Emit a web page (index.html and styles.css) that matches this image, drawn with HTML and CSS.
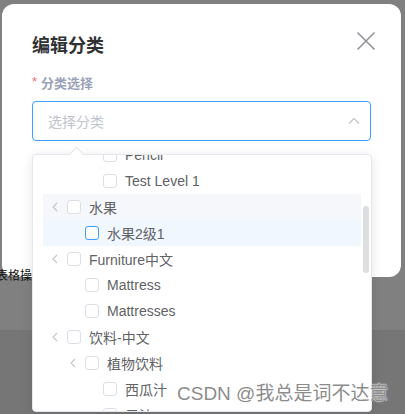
FILE: index.html
```html
<!DOCTYPE html>
<html lang="zh-CN">
<head>
  <meta charset="UTF-8">
  <meta name="viewport" content="width=device-width, initial-scale=1.0">
  <title>编辑分类</title>
  <link rel="stylesheet" href="styles.css">
</head>
<body>
  <div class="dialog">
    <div class="dialog-header">
      <span class="dialog-title">编辑分类</span>
      <button class="dialog-close" aria-label="close">
        <svg width="20" height="20" viewBox="0 0 20 20"><path d="M1.5 1.5L18.5 18.5M18.5 1.5L1.5 18.5" stroke="#909399" stroke-width="1.6" fill="none"/></svg>
      </button>
    </div>
    <div class="form-item">
      <label class="form-label"><span class="required">*</span>分类选择</label>
      <div class="select">
        <span class="placeholder">选择分类</span>
        <svg class="select-arrow" width="12" height="8" viewBox="0 0 12 8"><path d="M1 6.5L6 1.5L11 6.5" stroke="#c0c4cc" stroke-width="1.2" fill="none"/></svg>
      </div>
    </div>
  </div>
  <div class="page-peek">表格操作</div>

  <div class="dropdown">
    <div class="dropdown-arrow"></div>
    <div class="dropdown-body">
      <ul class="tree">
        <li class="node lvl3"><span class="expand"></span><span class="check"></span>Pencil</li>
        <li class="node lvl3"><span class="expand"></span><span class="check"></span>Test Level 1</li>
        <li class="node lvl1 hover"><span class="expand"><svg width="6" height="10" viewBox="0 0 6 10"><path d="M5 1L1 5L5 9" stroke="#c0c4cc" stroke-width="1.1" fill="none"/></svg></span><span class="check"></span>水果</li>
        <li class="node lvl2 current"><span class="expand"></span><span class="check active"></span>水果2级1</li>
        <li class="node lvl1"><span class="expand"><svg width="6" height="10" viewBox="0 0 6 10"><path d="M5 1L1 5L5 9" stroke="#c0c4cc" stroke-width="1.1" fill="none"/></svg></span><span class="check"></span>Furniture中文</li>
        <li class="node lvl2"><span class="expand"></span><span class="check"></span>Mattress</li>
        <li class="node lvl2"><span class="expand"></span><span class="check"></span>Mattresses</li>
        <li class="node lvl1"><span class="expand"><svg width="6" height="10" viewBox="0 0 6 10"><path d="M5 1L1 5L5 9" stroke="#c0c4cc" stroke-width="1.1" fill="none"/></svg></span><span class="check"></span>饮料-中文</li>
        <li class="node lvl2"><span class="expand"><svg width="6" height="10" viewBox="0 0 6 10"><path d="M5 1L1 5L5 9" stroke="#c0c4cc" stroke-width="1.1" fill="none"/></svg></span><span class="check"></span>植物饮料</li>
        <li class="node lvl3"><span class="expand"></span><span class="check"></span>西瓜汁</li>
        <li class="node lvl3"><span class="expand"></span><span class="check"></span>果汁</li>
      </ul>
      <div class="scrollbar"></div>
    </div>
  </div>

  <div class="watermark">CSDN @我总是词不达意</div>
</body>
</html>
```

FILE: styles.css
```css
html, body { margin:0; padding:0; height:100%; overflow:hidden; }
body { font-family:"Liberation Sans", Arial, "Noto Sans CJK SC", sans-serif; background:linear-gradient(#808080 0, #808080 330px, #767676 330px); position:relative; padding-top:4px; box-sizing:border-box; }

.page-peek { position:absolute; left:-4px; top:266px; font-size:12px; color:#111; }

.dialog { margin:0 4px 0 2px; height:273px; background:#fff; border-radius:12px; padding:30px 30px 0; box-sizing:border-box; position:relative; }
.dialog-header { display:flex; justify-content:space-between; align-items:flex-start; height:24px; }
.dialog-title { font-size:18px; line-height:24px; font-weight:bold; color:#303133; }
.dialog-close { border:none; background:none; padding:0; margin:-3px -5px 0 0; width:20px; height:20px; cursor:pointer; }
.dialog-close svg { display:block; }

.form-item { margin-top:16px; }
.form-label { display:block; font-size:13px; line-height:20px; font-weight:bold; color:#9aa2b9; margin-bottom:7px; }
.required { color:#f56c6c; margin-right:4px; font-weight:normal; position:relative; top:-2px; }
.select { height:40px; box-sizing:border-box; border:1px solid #409eff; border-radius:4px; display:flex; align-items:center; justify-content:space-between; padding:0 10px 0 15px; }
.placeholder { font-size:14px; color:#c0c4cc; }
.select-arrow { display:block; }

.dropdown { position:absolute; left:32px; top:154px; width:340px; height:258px; box-sizing:border-box; background:#fff; border:1px solid #e4e7ed; border-radius:4px; box-shadow:0 2px 12px rgba(0,0,0,0.1); }
.dropdown-arrow { position:absolute; left:38px; top:-6px; width:10px; height:10px; background:#fff; border-top:1px solid #e4e7ed; border-left:1px solid #e4e7ed; transform:rotate(45deg); }
.dropdown-body { height:100%; overflow:hidden; position:relative; padding:0 10px; box-sizing:border-box; }

.tree { list-style:none; margin:-13px 0 0; padding:0; }
.node { display:flex; align-items:center; height:26px; font-size:14px; color:#606266; white-space:nowrap; }
.node.lvl2 { padding-left:18px; }
.node.lvl3 { padding-left:36px; }
.node.hover { background:#f5f7fa; }
.node.current { background:#f0f7ff; }
.expand { width:24px; display:flex; justify-content:center; align-items:center; flex-shrink:0; }
.expand svg { display:block; }
.check { width:14px; height:14px; box-sizing:border-box; border:1px solid #dcdfe6; border-radius:3px; background:#fff; margin-right:8px; flex-shrink:0; }
.check.active { border-color:#409eff; }

.scrollbar { position:absolute; right:2px; top:51px; width:6px; height:67px; background:#dddee0; border-radius:3px; }

.watermark { position:absolute; left:177px; top:382px; font-size:19px; line-height:24px; color:#8c8c8c; text-shadow:0 0 2px #fff, 0 0 1px #fff; white-space:nowrap; }
```
